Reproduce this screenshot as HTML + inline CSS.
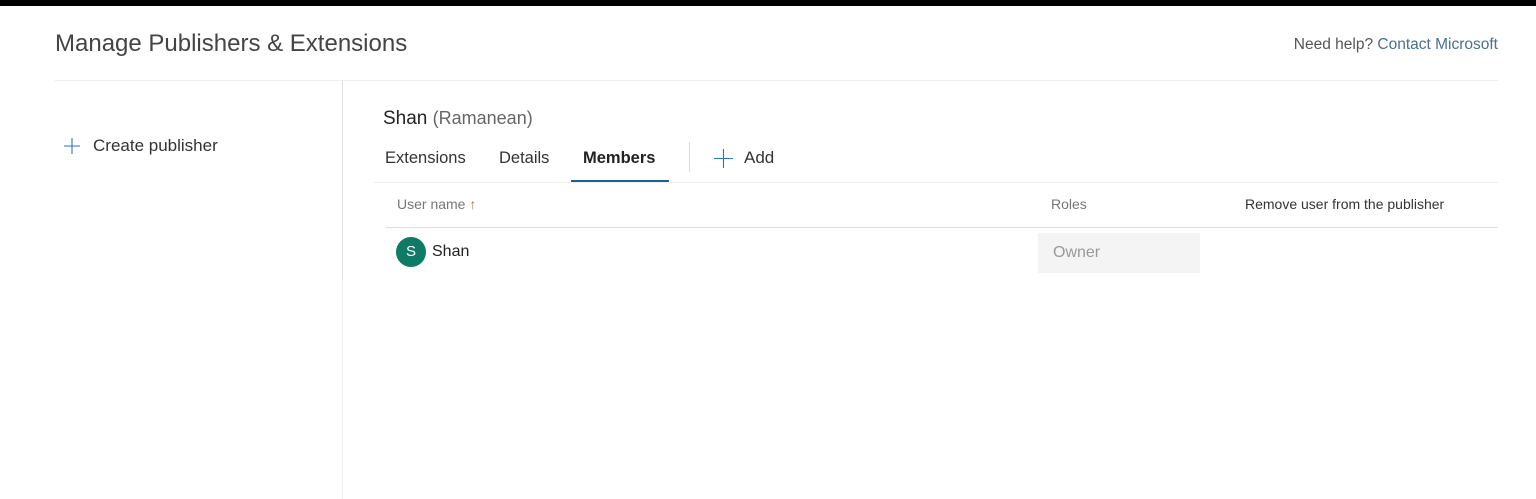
<!DOCTYPE html>
<html><head><meta charset="utf-8"><style>
*{margin:0;padding:0;box-sizing:border-box}
body{width:1536px;height:499px;background:#fff;font-family:"Liberation Sans",sans-serif;position:relative;overflow:hidden;color:#333}
.a{position:absolute;white-space:nowrap}
</style></head><body>
<div class="a" style="left:0;top:0;width:1536px;height:6px;background:#000"></div>
<div class="a" style="left:55px;top:30px;font-size:24px;color:#444;font-weight:300">Manage Publishers &amp; Extensions</div>
<div class="a" style="right:38px;top:36px;font-size:15.5px;color:#555">Need help? <span style="color:#4a6f93">Contact Microsoft</span></div>
<div class="a" style="left:55px;top:80px;width:1443px;height:1px;background:#eee"></div>
<div class="a" style="left:342px;top:96px;width:1px;height:403px;background:#eee"></div>
<div class="a" style="left:342px;top:80px;width:1px;height:200px;background:#e2e2e2"></div>
<svg class="a" style="left:64px;top:138px" width="16" height="16"><path d="M8 0V16M0 8H16" stroke="#2b73c7" stroke-width="1.1"/></svg>
<div class="a" style="left:93px;top:136px;font-size:17px;color:#333">Create publisher</div>
<div class="a" style="left:383px;top:108px;font-size:19px;color:#222">Shan <span style="color:#666;font-size:18px">(Ramanean)</span></div>
<div class="a" style="left:385px;top:149px;font-size:16.5px;color:#333">Extensions</div>
<div class="a" style="left:499px;top:149px;font-size:16.5px;color:#333">Details</div>
<div class="a" style="left:583px;top:149px;font-size:16.5px;color:#222;font-weight:bold">Members</div>
<div class="a" style="left:571px;top:180px;width:98px;height:2px;background:#1f5f9f"></div>
<div class="a" style="left:689px;top:142px;width:1px;height:30px;background:#ddd"></div>
<svg class="a" style="left:714px;top:149px" width="19" height="19"><path d="M9.5 0V19M0 9.5H19" stroke="#2b73c7" stroke-width="1.1"/></svg>
<div class="a" style="left:744px;top:148px;font-size:17px;color:#333">Add</div>
<div class="a" style="left:374px;top:182px;width:1124px;height:1px;background:#eee"></div>
<div class="a" style="left:397px;top:196px;font-size:14px;color:#777">User name <span style="color:#a07050;font-weight:300">&#8593;</span></div>
<div class="a" style="left:1051px;top:196px;font-size:14px;color:#777">Roles</div>
<div class="a" style="left:1245px;top:196px;font-size:14px;color:#333">Remove user from the publisher</div>
<div class="a" style="left:386px;top:227px;width:1112px;height:1px;background:#ddd"></div>
<div class="a" style="left:396px;top:237px;width:30px;height:30px;border-radius:50%;background:#0f7a65;color:#fff;font-size:15px;text-align:center;line-height:30px">S</div>
<div class="a" style="left:432px;top:243px;font-size:16px;color:#222">Shan</div>
<div class="a" style="left:1038px;top:233px;width:162px;height:40px;background:#f4f4f4"></div>
<div class="a" style="left:1053px;top:244px;font-size:16px;color:#999">Owner</div>
</body></html>
